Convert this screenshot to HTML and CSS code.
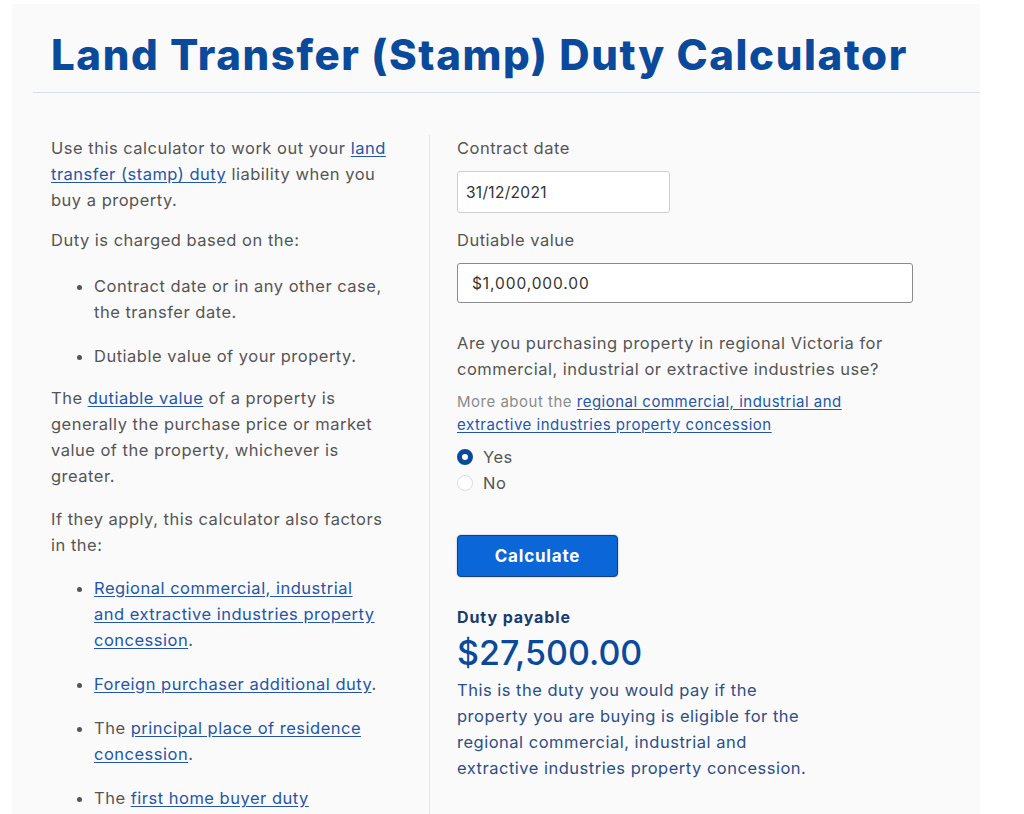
FILE: index.html
```html
<!DOCTYPE html>
<html lang="en">
<head>
<meta charset="utf-8">
<title>Land Transfer (Stamp) Duty Calculator</title>
<link rel="stylesheet" href="styles.css">
</head>
<body>
<div class="panel">
  <header class="head">
    <h1 class="title">Land Transfer (Stamp) Duty Calculator</h1>
  </header>
  <div class="cols">
    <section class="info">
      <p>Use this calculator to work out your <a href="#">land transfer (stamp) duty</a> liability when you buy a property.</p>
      <p>Duty is charged based on the:</p>
      <ul>
        <li>Contract date or in any other case, the transfer date.</li>
        <li>Dutiable value of your property.</li>
      </ul>
      <p class="gap">The <a href="#">dutiable value</a> of a property is generally the purchase price or market value of the property, whichever is greater.</p>
      <p>If they apply, this calculator also factors in the:</p>
      <ul class="factors">
        <li><a href="#">Regional commercial, industrial and extractive industries property concession</a>.</li>
        <li><a href="#">Foreign purchaser additional duty</a>.</li>
        <li>The <a href="#">principal place of residence concession</a>.</li>
        <li>The <a href="#">first home buyer duty exemption or concession</a>.</li>
      </ul>
    </section>
    <section class="calc">
      <label class="lbl">Contract date</label>
      <div class="input date">31/12/2021</div>
      <label class="lbl">Dutiable value</label>
      <div class="input value">$1,000,000.00</div>
      <p class="question">Are you purchasing property in regional Victoria for commercial, industrial or extractive industries use?</p>
      <p class="more">More about the <a href="#">regional commercial, industrial and extractive industries property concession</a></p>
      <div class="radios">
        <div class="radio"><span class="dot on"></span>Yes</div>
        <div class="radio"><span class="dot"></span>No</div>
      </div>
      <button class="btn">Calculate</button>
      <div class="result">
        <div class="res-label">Duty payable</div>
        <div class="res-amount">$27,500.00</div>
        <p class="res-text">This is the duty you would pay if the property you are buying is eligible for the regional commercial, industrial and extractive industries property concession.</p>
      </div>
    </section>
  </div>
</div>
</body>
</html>
```

FILE: styles.css
```css
html, body {
  margin: 0;
  padding: 0;
  background: #ffffff;
  height: 814px;
  overflow: hidden;
}
body {
  font-family: "Inter", "Open Sans", sans-serif;
  color: #555555;
  letter-spacing: 0.5px;
}
.panel {
  margin: 4px 44px 0 12px;
  background: #fafafa;
  height: 810px;
  overflow: hidden;
}
.head {
  margin-left: 21px;
  border-bottom: 1px solid #d9dee5;
  padding: 27px 0 13px 18px;
}
.title {
  margin: 0;
  font-size: 42px;
  line-height: 48px;
  font-weight: 800;
  color: #0b4a9b;
  letter-spacing: 1.6px;
}
.cols {
  display: flex;
  margin-top: 42px;
}
.info {
  width: 335px;
  margin-left: 39px;
  padding-right: 43px;
  border-right: 1px solid #e6e6e6;
  font-size: 16.5px;
  line-height: 26px;
}
.info p {
  margin: 0 0 14px;
}
.info p.gap {
  margin-bottom: 17px;
}
.info ul {
  margin: 20px 0 16px;
  padding-left: 43px;
}
.info ul.factors {
  margin-top: 17px;
}
.info li {
  margin-bottom: 18px;
}
.info li:last-child {
  margin-bottom: 0;
}
a {
  color: #2456a8;
  text-decoration: underline;
  text-underline-offset: 2px;
}
.calc {
  padding-left: 27px;
  width: 456px;
  display: flex;
  flex-direction: column;
  align-items: flex-start;
}
.lbl {
  font-size: 16.5px;
  line-height: 26px;
  color: #555;
}
.input {
  box-sizing: border-box;
  background: #fff;
  border: 1px solid #cfcfcf;
  border-radius: 3px;
  font-size: 15.5px;
  color: #333;
  display: flex;
  align-items: center;
}
.date {
  width: 213px;
  height: 42px;
  padding-left: 8px;
  margin: 10px 0 14px;
  letter-spacing: 0.3px;
}
.value {
  width: 456px;
  height: 40px;
  padding-left: 14px;
  border-color: #8a8a8a;
  margin: 10px 0 27px;
  letter-spacing: 0.9px;
}
.question {
  margin: 0 0 8px;
  font-size: 16.5px;
  line-height: 26px;
}
.more {
  margin: 0 0 8px;
  font-size: 15px;
  line-height: 23px;
  color: #8a8a8a;
}
.radios {
  display: flex;
  flex-direction: column;
}
.radio {
  display: flex;
  align-items: center;
  font-size: 16.5px;
  line-height: 26px;
  color: #555;
}
.dot {
  box-sizing: border-box;
  width: 16px;
  height: 16px;
  border-radius: 50%;
  border: 1px solid #dcdcdc;
  background: #fff;
  margin-right: 10px;
}
.dot.on {
  border: 5px solid #0b4a9b;
}
.btn {
  margin-top: 39px;
  width: 161px;
  height: 42px;
  background: #0b67d8;
  border: 1px solid #163f78;
  border-radius: 4px;
  box-shadow: 0 0 2px rgba(22, 63, 120, 0.4);
  color: #fff;
  font-family: inherit;
  font-size: 17px;
  font-weight: 700;
  letter-spacing: 0.8px;
}
.result {
  margin-top: 28px;
}
.res-label {
  font-size: 16px;
  font-weight: 700;
  line-height: 24px;
  color: #1c3b6e;
  letter-spacing: 0.9px;
}
.res-amount {
  font-size: 34px;
  line-height: 48px;
  font-weight: 500;
  color: #0b4a9b;
  letter-spacing: 0;
}
.res-text {
  margin: 0;
  width: 356px;
  font-size: 16.5px;
  line-height: 26px;
  color: #2c4f86;
}
```
